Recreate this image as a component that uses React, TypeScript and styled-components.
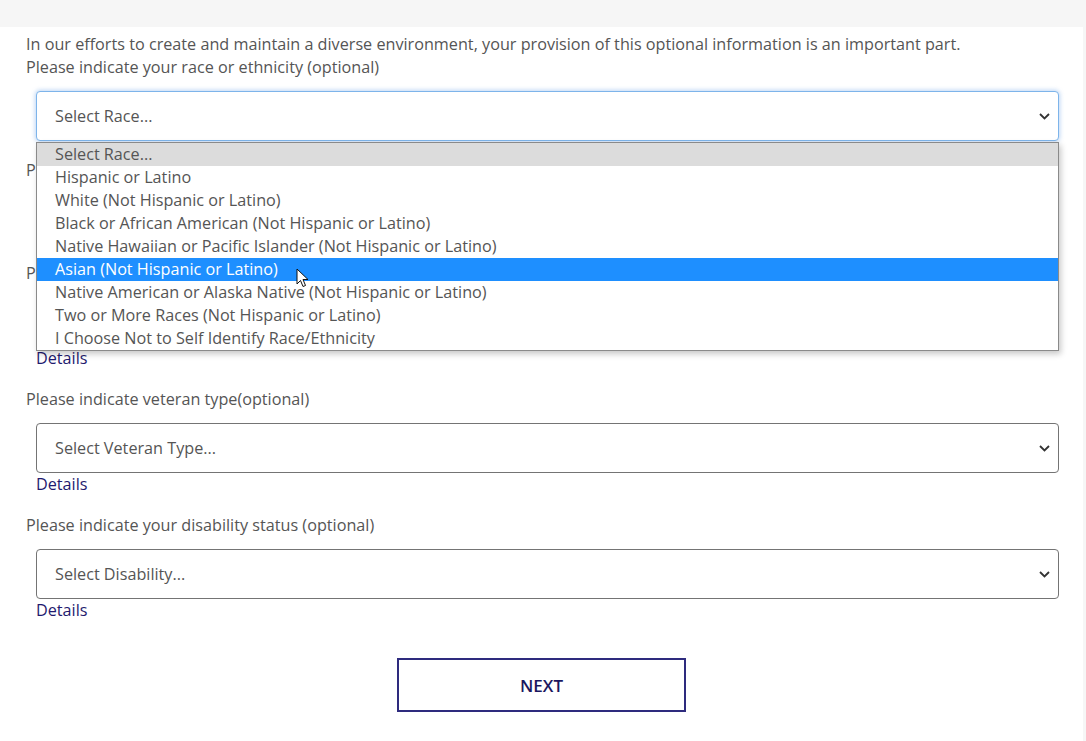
import React from "react";
import styled, { createGlobalStyle } from "styled-components";

const GlobalStyle = createGlobalStyle`
  html, body { margin: 0; padding: 0; background: #f6f6f6; }
  body { font-family: "Open Sans", "Liberation Sans", sans-serif; }
  * { box-sizing: border-box; }
`;

const FONT = "16.2px";

const Page = styled.div`
  width: 1086px;
  height: 741px;
  background: #f6f6f6;
  padding-top: 27px;
  overflow: hidden;
`;

const Content = styled.main`
  width: 1083px;
  height: 714px;
  background: #ffffff;
  padding: 6px 0 0 26px;
  color: #555555;
  font-size: ${FONT};
`;

const Intro = styled.p`
  margin: 0;
  line-height: 23px;
  white-space: nowrap;
`;

const Label = styled.div`
  margin-top: 18px;
  line-height: 23px;
  height: 23px;
  white-space: nowrap;
`;

const SelectWrap = styled.div`
  position: relative;
  margin: 12px 0 0 10px;
  width: 1023px;
`;

const SelectBox = styled.div<{ $focused?: boolean }>`
  height: 50px;
  border: 1px solid ${(p) => (p.$focused ? "#7db4ea" : "#747474")};
  border-radius: 4px;
  box-shadow: ${(p) => (p.$focused ? "0 0 4px 1px rgba(110, 165, 230, 0.45)" : "none")};
  display: flex;
  align-items: center;
  justify-content: space-between;
  padding: 0 8px 0 18px;
  color: #555555;
  font-size: ${FONT};
  background: #fff;
`;

const Chevron = () => (
  <svg width="11" height="7" viewBox="0 0 11 7">
    <polyline points="1,1 5.5,5.5 10,1" fill="none" stroke="#333" strokeWidth="1.8" />
  </svg>
);

const Details = styled.a`
  display: block;
  margin-left: 10px;
  line-height: 23px;
  height: 23px;
  color: #1f1a6e;
  text-decoration: none;
`;

const Menu = styled.ul`
  position: absolute;
  top: 51px;
  left: 0;
  width: 1023px;
  margin: 0;
  padding: 0;
  list-style: none;
  background: #fff;
  border: 1px solid #8a8a8a;
  box-shadow: 2px 3px 6px rgba(0, 0, 0, 0.22);
  z-index: 5;
`;

const MenuItem = styled.li<{ $active?: boolean; $placeholder?: boolean }>`
  height: 23px;
  line-height: 23px;
  padding-left: 18px;
  font-size: ${FONT};
  color: ${(p) => (p.$active ? "#ffffff" : "#555555")};
  background: ${(p) => (p.$active ? "#1e8fff" : p.$placeholder ? "#dcdcdc" : "#ffffff")};
  white-space: nowrap;
`;

const Cursor = styled.svg`
  position: absolute;
  left: 260px;
  top: 177px;
  z-index: 6;
`;

const ButtonRow = styled.div`
  display: flex;
  justify-content: center;
  margin: 36px 0 0 -26px;
`;

const NextButton = styled.button`
  width: 289px;
  height: 54px;
  border: 2px solid #2e2b7e;
  background: #fff;
  color: #1b1760;
  font-family: "Open Sans", "Liberation Sans", sans-serif;
  font-size: 17px;
  font-weight: 600;
  cursor: pointer;
`;

const options = [
  "Select Race...",
  "Hispanic or Latino",
  "White (Not Hispanic or Latino)",
  "Black or African American (Not Hispanic or Latino)",
  "Native Hawaiian or Pacific Islander (Not Hispanic or Latino)",
  "Asian (Not Hispanic or Latino)",
  "Native American or Alaska Native (Not Hispanic or Latino)",
  "Two or More Races (Not Hispanic or Latino)",
  "I Choose Not to Self Identify Race/Ethnicity",
];

export default function App() {
  return (
    <>
      <GlobalStyle />
      <Page>
        <Content>
          <Intro>
            In our efforts to create and maintain a diverse environment, your provision of this optional information is an important part.
            <br />
            Please indicate your race or ethnicity (optional)
          </Intro>
          <SelectWrap>
            <SelectBox $focused>
              <span>Select Race...</span>
              <Chevron />
            </SelectBox>
            <Menu>
              {options.map((o, i) => (
                <MenuItem key={o} $placeholder={i === 0} $active={i === 5}>
                  {o}
                </MenuItem>
              ))}
            </Menu>
            <Cursor width="13" height="20" viewBox="0 0 13 20">
              <path
                d="M1 1 L1 16 L4.5 12.5 L7 18.5 L9.5 17.5 L7 11.5 L12 11.5 Z"
                fill="#fff"
                stroke="#111"
                strokeWidth="1"
                strokeLinejoin="round"
              />
            </Cursor>
          </SelectWrap>

          <Label>Please indicate your gender (optional)</Label>
          <SelectWrap>
            <SelectBox>
              <span>Select Gender...</span>
              <Chevron />
            </SelectBox>
          </SelectWrap>

          <Label>Please indicate your protected veteran status (optional)</Label>
          <SelectWrap>
            <SelectBox>
              <span>Select Veteran Status...</span>
              <Chevron />
            </SelectBox>
          </SelectWrap>
          <Details href="#">Details</Details>

          <Label>Please indicate veteran type(optional)</Label>
          <SelectWrap>
            <SelectBox>
              <span>Select Veteran Type...</span>
              <Chevron />
            </SelectBox>
          </SelectWrap>
          <Details href="#">Details</Details>

          <Label>Please indicate your disability status (optional)</Label>
          <SelectWrap>
            <SelectBox>
              <span>Select Disability...</span>
              <Chevron />
            </SelectBox>
          </SelectWrap>
          <Details href="#">Details</Details>

          <ButtonRow>
            <NextButton>NEXT</NextButton>
          </ButtonRow>
        </Content>
      </Page>
    </>
  );
}
